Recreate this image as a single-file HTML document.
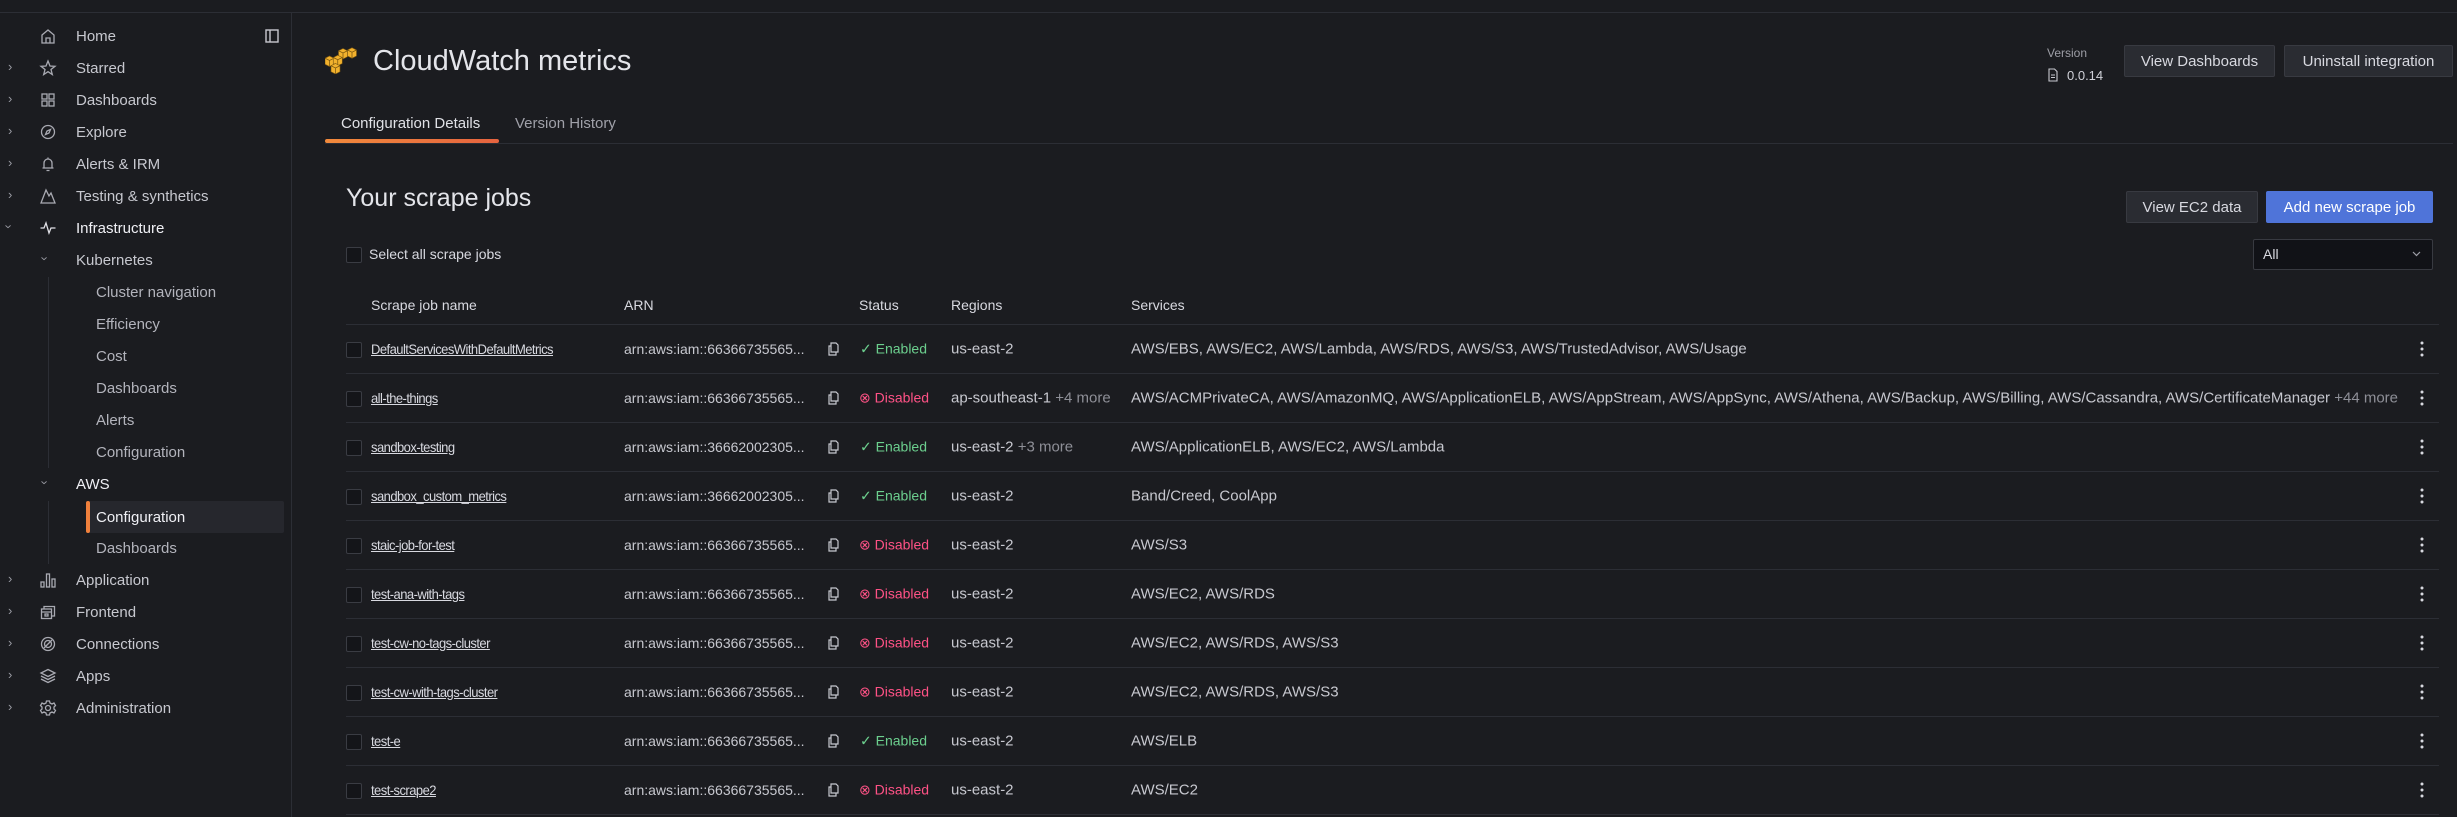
<!DOCTYPE html>
<html><head><meta charset="utf-8"><style>
*{margin:0;padding:0;box-sizing:border-box}
body{width:2457px;height:817px;background:#1b1c20;font-family:"Liberation Sans",Arial,sans-serif;color:#ccccdc;position:relative;overflow:hidden}
.a{position:absolute;white-space:nowrap}
.topline{position:absolute;left:0;top:12px;width:2457px;height:1px;background:#2c2e35}
.sideb{position:absolute;left:291px;top:13px;width:1px;height:804px;background:#2c2e35}
.si{position:absolute;font-size:15px;line-height:20px;color:#c7c8cf;transform:translateY(-9px)}
.sw{color:#f0f0f5}
.ic{position:absolute;width:18px;height:18px;transform:translate(-9px,-9px)}
.chev{position:absolute;font-size:13px;color:#9a9ba3;transform:translate(-4px,-9px)}
.btn{position:absolute;background:#2a2c32;border:1px solid #383a41;border-radius:2px;color:#d8d9e0;font-size:15px;display:flex;align-items:center;justify-content:center}
.row{position:absolute;left:346px;width:2093px;height:49px;border-bottom:1px solid #2c2e35}
.t{position:absolute;top:50%;transform:translateY(-50%);font-size:14px;white-space:nowrap}
.cb{position:absolute;left:0;top:50%;width:16px;height:16px;margin-top:-7px;border:1px solid #3a3c43;background:#141519;border-radius:2px}
.nm{left:25px;color:#d8d9e0;text-decoration:underline;font-size:14px;letter-spacing:-0.6px;transform:translateY(-50%) scaleX(0.93);transform-origin:left center}
.arn{left:278px;color:#c7c8cf}
.cp{position:absolute;left:481px;top:50%;margin-top:-7px}
.en{left:514px;color:#6ccf8e}
.ds{left:513px;color:#ff5286}
.rg{left:605px;color:#c7c8cf;font-size:15px}
.sv{left:785px;color:#c7c8cf;font-size:15px}
.more{color:#8e8f97}
.kb{position:absolute;left:2074px;top:50%;margin-top:-8px}
</style></head><body>
<div class="topline"></div>
<div class="sideb"></div>

<!-- sidebar -->
<svg class="ic" style="left:48px;top:36px" viewBox="0 0 18 18" fill="none" stroke="#a9aab2" stroke-width="1.3"><path d="M3 8 L9 3 L15 8 V16 H3 Z"/><path d="M7 16 V11 H11 V16"/></svg>
<div class="si" style="left:76px;top:36px">Home</div>
<svg class="a" style="left:265px;top:29px" width="14" height="14" viewBox="0 0 14 14" fill="none" stroke="#c7c8cf" stroke-width="1.4"><rect x="1" y="1" width="12" height="12"/><path d="M5 1 V13"/></svg>

<div class="chev" style="left:12px;top:68px">›</div>
<svg class="ic" style="left:48px;top:68px" viewBox="0 0 18 18" fill="none" stroke="#a9aab2" stroke-width="1.3"><path d="M9 2 L11 7 L16 7.3 L12 10.5 L13.3 15.5 L9 12.7 L4.7 15.5 L6 10.5 L2 7.3 L7 7 Z"/></svg>
<div class="si" style="left:76px;top:68px">Starred</div>

<div class="chev" style="left:12px;top:100px">›</div>
<svg class="ic" style="left:48px;top:100px" viewBox="0 0 18 18" fill="none" stroke="#a9aab2" stroke-width="1.3"><rect x="3" y="3" width="5" height="5"/><rect x="10" y="3" width="5" height="5"/><rect x="3" y="10" width="5" height="5"/><rect x="10" y="10" width="5" height="5"/></svg>
<div class="si" style="left:76px;top:100px">Dashboards</div>

<div class="chev" style="left:12px;top:132px">›</div>
<svg class="ic" style="left:48px;top:132px" viewBox="0 0 18 18" fill="none" stroke="#a9aab2" stroke-width="1.3"><circle cx="9" cy="9" r="6.5"/><path d="M11.5 6.5 L10 10 L6.5 11.5 L8 8 Z"/></svg>
<div class="si" style="left:76px;top:132px">Explore</div>

<div class="chev" style="left:12px;top:164px">›</div>
<svg class="ic" style="left:48px;top:164px" viewBox="0 0 18 18" fill="none" stroke="#a9aab2" stroke-width="1.3"><path d="M5 13 V8 A4 4 0 0 1 13 8 V13 Z M3.5 13 H14.5 M7.5 15.5 H10.5 M9 2.5 V4"/></svg>
<div class="si" style="left:76px;top:164px">Alerts &amp; IRM</div>

<div class="chev" style="left:12px;top:196px">›</div>
<svg class="ic" style="left:48px;top:196px" viewBox="0 0 18 18" fill="none" stroke="#a9aab2" stroke-width="1.3"><path d="M2 16 L7 3 L10 9 L12 6 L16 16 Z"/></svg>
<div class="si" style="left:76px;top:196px">Testing &amp; synthetics</div>

<div class="chev" style="left:12px;top:228px;transform:translate(-5px,-9px) rotate(90deg)">›</div>
<svg class="ic" style="left:48px;top:228px" viewBox="0 0 18 18" fill="none" stroke="#e0e0e6" stroke-width="1.3"><path d="M1.5 9 H5 L7 4 L10 14 L12 9 H16.5"/></svg>
<div class="si sw" style="left:76px;top:228px">Infrastructure</div>

<div class="chev" style="left:48px;top:260px;transform:translate(-5px,-9px) rotate(90deg)">›</div>
<div class="si" style="left:76px;top:260px">Kubernetes</div>
<div class="a" style="left:48px;top:277px;width:1px;height:191px;background:#2c2e35"></div>
<div class="si" style="left:96px;top:292px;color:#b3b4bc">Cluster navigation</div>
<div class="si" style="left:96px;top:324px;color:#b3b4bc">Efficiency</div>
<div class="si" style="left:96px;top:356px;color:#b3b4bc">Cost</div>
<div class="si" style="left:96px;top:388px;color:#b3b4bc">Dashboards</div>
<div class="si" style="left:96px;top:420px;color:#b3b4bc">Alerts</div>
<div class="si" style="left:96px;top:452px;color:#b3b4bc">Configuration</div>

<div class="chev" style="left:48px;top:484px;transform:translate(-5px,-9px) rotate(90deg)">›</div>
<div class="si sw" style="left:76px;top:484px">AWS</div>
<div class="a" style="left:48px;top:501px;width:1px;height:63px;background:#2c2e35"></div>
<div class="a" style="left:86px;top:501px;width:198px;height:32px;background:#26272d;border-radius:2px"></div>
<div class="a" style="left:86px;top:501px;width:4px;height:32px;background:#f0803c;border-radius:2px"></div>
<div class="si sw" style="left:96px;top:517px">Configuration</div>
<div class="si" style="left:96px;top:548px;color:#b3b4bc">Dashboards</div>

<div class="chev" style="left:12px;top:580px">›</div>
<svg class="ic" style="left:48px;top:580px" viewBox="0 0 18 18" fill="none" stroke="#a9aab2" stroke-width="1.3"><rect x="2" y="11" width="3" height="5"/><rect x="7.5" y="3" width="3" height="13"/><rect x="13" y="8" width="3" height="8"/></svg>
<div class="si" style="left:76px;top:580px">Application</div>

<div class="chev" style="left:12px;top:612px">›</div>
<svg class="ic" style="left:48px;top:612px" viewBox="0 0 18 18" fill="none" stroke="#a9aab2" stroke-width="1.3"><rect x="2.5" y="6" width="10" height="9.5"/><path d="M5 6 V3.5 H15.5 V13 H12.5 M2.5 9 H12.5"/><rect x="6" y="11" width="3" height="2"/></svg>
<div class="si" style="left:76px;top:612px">Frontend</div>

<div class="chev" style="left:12px;top:644px">›</div>
<svg class="ic" style="left:48px;top:644px" viewBox="0 0 18 18" fill="none" stroke="#a9aab2" stroke-width="1.3"><circle cx="9" cy="9" r="6.5"/><circle cx="9" cy="9" r="3.5"/><path d="M5 13 L13 5"/></svg>
<div class="si" style="left:76px;top:644px">Connections</div>

<div class="chev" style="left:12px;top:676px">›</div>
<svg class="ic" style="left:48px;top:676px" viewBox="0 0 18 18" fill="none" stroke="#a9aab2" stroke-width="1.3"><path d="M9 2.5 L16 6 L9 9.5 L2 6 Z M2 9 L9 12.5 L16 9 M2 12 L9 15.5 L16 12"/></svg>
<div class="si" style="left:76px;top:676px">Apps</div>

<div class="chev" style="left:12px;top:708px">›</div>
<svg class="ic" style="left:48px;top:708px" viewBox="0 0 18 18" fill="none" stroke="#a9aab2" stroke-width="1.3"><circle cx="9" cy="9" r="2.5"/><path d="M7.5 2 H10.5 L11 4 L13 5 L15 4 L16.5 6.5 L15 8 V10 L16.5 11.5 L15 14 L13 13 L11 14 L10.5 16 H7.5 L7 14 L5 13 L3 14 L1.5 11.5 L3 10 V8 L1.5 6.5 L3 4 L5 5 L7 4 Z"/></svg>
<div class="si" style="left:76px;top:708px">Administration</div>

<!-- header -->
<svg class="a" style="left:325px;top:47px" width="33" height="27" viewBox="0 0 22 18">
<defs><g id="cube"><path d="M0 1.5 L3 0 L6 1.5 V5.5 L3 7 L0 5.5 Z" fill="#f2b12d" stroke="#7a560f" stroke-width="0.4"/><path d="M0 1.5 L3 3 L6 1.5 M3 3 V7" fill="none" stroke="#7a560f" stroke-width="0.5"/></g></defs>
<use href="#cube" x="9" y="1"/><use href="#cube" x="15" y="0.5"/>
<use href="#cube" x="0" y="6"/><use href="#cube" x="5.5" y="5.5"/><use href="#cube" x="4" y="11"/>
</svg>
<div class="a" style="left:373px;top:44px;font-size:29px;line-height:34px;color:#e4e5ea">CloudWatch metrics</div>

<div class="a" style="left:2047px;top:46px;font-size:12px;color:#9d9ea6">Version</div>
<svg class="a" style="left:2048px;top:68px" width="10" height="14" viewBox="0 0 10 14" fill="none" stroke="#c7c8cf" stroke-width="1.1"><path d="M1 1 H6.5 L9 3.5 V13 H1 Z M3 7 H7 M3 9.5 H7"/></svg>
<div class="a" style="left:2067px;top:68px;font-size:13px;color:#d0d1d8">0.0.14</div>
<div class="btn" style="left:2124px;top:45px;width:151px;height:32px">View Dashboards</div>
<div class="btn" style="left:2284px;top:45px;width:169px;height:32px">Uninstall integration</div>

<div class="a" style="left:325px;top:143px;width:2128px;height:1px;background:#2c2e35"></div>
<div class="a" style="left:325px;top:139px;width:174px;height:4px;border-radius:2px;background:linear-gradient(90deg,#f28a3c,#e5633f)"></div>
<div class="a" style="left:341px;top:115px;font-size:15px;color:#e0e1e6">Configuration Details</div>
<div class="a" style="left:515px;top:115px;font-size:15px;color:#a0a1a9">Version History</div>

<div class="a" style="left:346px;top:184px;font-size:25px;color:#e4e5ea">Your scrape jobs</div>
<div class="btn" style="left:2126px;top:191px;width:132px;height:32px">View EC2 data</div>
<div class="btn" style="left:2266px;top:191px;width:167px;height:32px;background:#4f74d9;border-color:#4f74d9;color:#fff">Add new scrape job</div>

<div class="a" style="left:346px;top:247px;width:16px;height:16px;border:1px solid #3a3c43;background:#141519;border-radius:2px"></div>
<div class="a" style="left:369px;top:246px;font-size:14px;color:#d8d9e0">Select all scrape jobs</div>
<div class="a" style="left:2253px;top:239px;width:180px;height:31px;background:#111217;border:1px solid #383a41;border-radius:2px"></div>
<div class="a" style="left:2263px;top:246px;font-size:14px;color:#d8d9e0">All</div>
<svg class="a" style="left:2412px;top:251px" width="9" height="6" viewBox="0 0 9 6" fill="none" stroke="#9d9ea6" stroke-width="1.2"><path d="M1 1 L4.5 4.5 L8 1"/></svg>

<div class="a" style="left:371px;top:297px;font-size:14px;color:#d8d9e0">Scrape job name</div>
<div class="a" style="left:624px;top:297px;font-size:14px;color:#d8d9e0">ARN</div>
<div class="a" style="left:859px;top:297px;font-size:14px;color:#d8d9e0">Status</div>
<div class="a" style="left:951px;top:297px;font-size:14px;color:#d8d9e0">Regions</div>
<div class="a" style="left:1131px;top:297px;font-size:14px;color:#d8d9e0">Services</div>
<div class="a" style="left:346px;top:324px;width:2093px;height:1px;background:#2c2e35"></div>

<svg width="0" height="0" style="position:absolute"><defs>
<g id="cp" fill="none" stroke="#c7c8cf" stroke-width="1.2"><path d="M4 1 H9 L11 3 V10 H4 Z"/><path d="M4 4 H2 V13 H9 V10"/></g>
<g id="kb" fill="#d8d9e0"><circle cx="2" cy="2" r="1.5"/><circle cx="2" cy="8" r="1.5"/><circle cx="2" cy="14" r="1.5"/></g>
</defs></svg>

<div class="row" style="top:325px"><div class="cb"></div><span class="t nm">DefaultServicesWithDefaultMetrics</span><span class="t arn">arn:aws:iam::66366735565...</span><svg class="cp" width="13" height="14"><use href="#cp"/></svg><span class="t en">✓ Enabled</span><span class="t rg">us-east-2</span><span class="t sv">AWS/EBS, AWS/EC2, AWS/Lambda, AWS/RDS, AWS/S3, AWS/TrustedAdvisor, AWS/Usage</span><svg class="kb" width="4" height="16"><use href="#kb"/></svg></div>
<div class="row" style="top:374px"><div class="cb"></div><span class="t nm">all-the-things</span><span class="t arn">arn:aws:iam::66366735565...</span><svg class="cp" width="13" height="14"><use href="#cp"/></svg><span class="t ds">⊗ Disabled</span><span class="t rg">ap-southeast-1 <span class="more">+4 more</span></span><span class="t sv">AWS/ACMPrivateCA, AWS/AmazonMQ, AWS/ApplicationELB, AWS/AppStream, AWS/AppSync, AWS/Athena, AWS/Backup, AWS/Billing, AWS/Cassandra, AWS/CertificateManager <span class="more">+44 more</span></span><svg class="kb" width="4" height="16"><use href="#kb"/></svg></div>
<div class="row" style="top:423px"><div class="cb"></div><span class="t nm">sandbox-testing</span><span class="t arn">arn:aws:iam::36662002305...</span><svg class="cp" width="13" height="14"><use href="#cp"/></svg><span class="t en">✓ Enabled</span><span class="t rg">us-east-2 <span class="more">+3 more</span></span><span class="t sv">AWS/ApplicationELB, AWS/EC2, AWS/Lambda</span><svg class="kb" width="4" height="16"><use href="#kb"/></svg></div>
<div class="row" style="top:472px"><div class="cb"></div><span class="t nm">sandbox_custom_metrics</span><span class="t arn">arn:aws:iam::36662002305...</span><svg class="cp" width="13" height="14"><use href="#cp"/></svg><span class="t en">✓ Enabled</span><span class="t rg">us-east-2</span><span class="t sv">Band/Creed, CoolApp</span><svg class="kb" width="4" height="16"><use href="#kb"/></svg></div>
<div class="row" style="top:521px"><div class="cb"></div><span class="t nm">staic-job-for-test</span><span class="t arn">arn:aws:iam::66366735565...</span><svg class="cp" width="13" height="14"><use href="#cp"/></svg><span class="t ds">⊗ Disabled</span><span class="t rg">us-east-2</span><span class="t sv">AWS/S3</span><svg class="kb" width="4" height="16"><use href="#kb"/></svg></div>
<div class="row" style="top:570px"><div class="cb"></div><span class="t nm">test-ana-with-tags</span><span class="t arn">arn:aws:iam::66366735565...</span><svg class="cp" width="13" height="14"><use href="#cp"/></svg><span class="t ds">⊗ Disabled</span><span class="t rg">us-east-2</span><span class="t sv">AWS/EC2, AWS/RDS</span><svg class="kb" width="4" height="16"><use href="#kb"/></svg></div>
<div class="row" style="top:619px"><div class="cb"></div><span class="t nm">test-cw-no-tags-cluster</span><span class="t arn">arn:aws:iam::66366735565...</span><svg class="cp" width="13" height="14"><use href="#cp"/></svg><span class="t ds">⊗ Disabled</span><span class="t rg">us-east-2</span><span class="t sv">AWS/EC2, AWS/RDS, AWS/S3</span><svg class="kb" width="4" height="16"><use href="#kb"/></svg></div>
<div class="row" style="top:668px"><div class="cb"></div><span class="t nm">test-cw-with-tags-cluster</span><span class="t arn">arn:aws:iam::66366735565...</span><svg class="cp" width="13" height="14"><use href="#cp"/></svg><span class="t ds">⊗ Disabled</span><span class="t rg">us-east-2</span><span class="t sv">AWS/EC2, AWS/RDS, AWS/S3</span><svg class="kb" width="4" height="16"><use href="#kb"/></svg></div>
<div class="row" style="top:717px"><div class="cb"></div><span class="t nm">test-e</span><span class="t arn">arn:aws:iam::66366735565...</span><svg class="cp" width="13" height="14"><use href="#cp"/></svg><span class="t en">✓ Enabled</span><span class="t rg">us-east-2</span><span class="t sv">AWS/ELB</span><svg class="kb" width="4" height="16"><use href="#kb"/></svg></div>
<div class="row" style="top:766px"><div class="cb"></div><span class="t nm">test-scrape2</span><span class="t arn">arn:aws:iam::66366735565...</span><svg class="cp" width="13" height="14"><use href="#cp"/></svg><span class="t ds">⊗ Disabled</span><span class="t rg">us-east-2</span><span class="t sv">AWS/EC2</span><svg class="kb" width="4" height="16"><use href="#kb"/></svg></div>
</body></html>
